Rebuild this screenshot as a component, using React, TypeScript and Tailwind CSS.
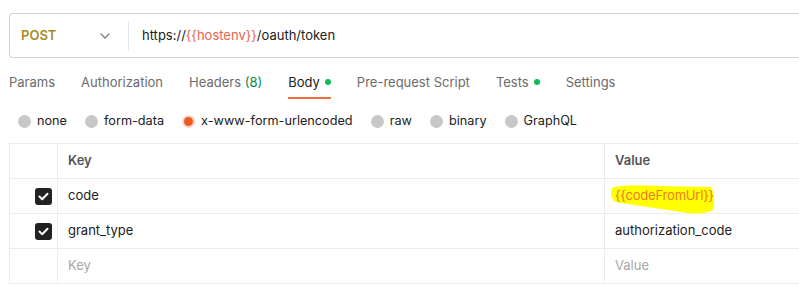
import React from "react";

const font = { fontFamily: "Inter, 'Noto Sans', sans-serif" };

function Check() {
  return (
    <div className="w-[17px] h-[17px] rounded-[3px] bg-[#222] flex items-center justify-center">
      <svg width="11" height="9" viewBox="0 0 11 9" fill="none">
        <path d="M1.5 4.5 L4.2 7.2 L9.5 1.8" stroke="white" strokeWidth="2" strokeLinecap="round" strokeLinejoin="round" />
      </svg>
    </div>
  );
}

function Radio({ label, selected }: { label: string; selected?: boolean }) {
  return (
    <div className="flex items-center gap-[6px]">
      {selected ? (
        <div className="w-[13px] h-[13px] rounded-full bg-[#fbd4c6] flex items-center justify-center">
          <div className="w-[9px] h-[9px] rounded-full bg-[#ef5b25]" />
        </div>
      ) : (
        <div className="w-[13px] h-[13px] rounded-full bg-[#c8c8c8]" />
      )}
      <span className="text-[12.7px] text-[#212121] leading-5">{label}</span>
    </div>
  );
}

export default function App() {
  const tabs: { label: React.ReactNode; active?: boolean }[] = [
    { label: "Params" },
    { label: "Authorization" },
    {
      label: (
        <>
          Headers <span className="text-[#0b8a4a]">(8)</span>
        </>
      ),
    },
    {
      label: (
        <span className="flex items-center gap-[5px]">
          Body <span className="w-[6px] h-[6px] rounded-full bg-[#0cbb52] inline-block" />
        </span>
      ),
      active: true,
    },
    { label: "Pre-request Script" },
    {
      label: (
        <span className="flex items-center gap-[5px]">
          Tests <span className="w-[6px] h-[6px] rounded-full bg-[#0cbb52] inline-block" />
        </span>
      ),
    },
    { label: "Settings" },
  ];

  return (
    <div className="w-[799px] h-[293px] bg-white overflow-hidden" style={font}>
      <div className="pt-[13px] pl-[9px]">
        <div className="h-[45px] border border-r-0 border-[#d2d2d2] rounded-l-[4px] flex items-center">
          <div className="w-[118px] flex items-center justify-between pl-[11px] pr-[18px]">
            <span className="text-[13px] font-semibold text-[#a98a21]">POST</span>
            <svg width="10" height="6" viewBox="0 0 10 6" fill="none">
              <path d="M1 1 L5 5 L9 1" stroke="#7a7a7a" strokeWidth="1.2" strokeLinecap="round" strokeLinejoin="round" />
            </svg>
          </div>
          <div className="w-px h-[30px] bg-[#e6e6e6]" />
          <div className="pl-[13px] text-[13px] text-[#212121]">
            https://<span className="text-[#e8664c]">{"{{hostenv}}"}</span>/oauth/token
          </div>
        </div>
      </div>

      <div className="flex pl-[9px] gap-[26px]">
        {tabs.map((t, i) => (
          <div
            key={i}
            className={`pt-[14px] pb-[5px] text-[13px] leading-5 border-b-2 ${
              t.active ? "border-[#f26b3a] text-[#212121]" : "border-transparent text-[#6b6b6b]"
            }`}
          >
            {t.label}
          </div>
        ))}
      </div>

      <div className="flex items-center pl-[18px] mt-[12px] gap-[18px]">
        <Radio label="none" />
        <Radio label="form-data" />
        <Radio label="x-www-form-urlencoded" selected />
        <Radio label="raw" />
        <Radio label="binary" />
        <Radio label="GraphQL" />
      </div>

      <div className="mt-[12px] ml-[9px] border-t border-l border-[#ececec] text-[13px]">
        <div className="grid grid-cols-[48px_547px_1fr] h-[35px] border-b border-[#ececec]">
          <div className="border-r border-[#ececec]" />
          <div className="border-r border-[#ececec] flex items-center pl-[10px] font-semibold text-[#555]">Key</div>
          <div className="flex items-center pl-[10px] font-semibold text-[#555]">Value</div>
        </div>
        <div className="grid grid-cols-[48px_547px_1fr] h-[35px] border-b border-[#ececec]">
          <div className="border-r border-[#ececec] flex items-center justify-end pr-[5px]">
            <Check />
          </div>
          <div className="border-r border-[#ececec] flex items-center pl-[10px] text-[#212121]">code</div>
          <div className="relative flex items-center pl-[10px]">
            <svg className="absolute left-0 top-0" width="120" height="36" viewBox="0 0 120 36">
              <path
                d="M7,9 Q16,5 56,7 L106,8 Q111,17 108,31 Q96,37 76,33 Q36,27 10,23 Q4,17 7,9Z"
                fill="#ffff00"
              />
            </svg>
            <span className="relative text-[#ee7a2a] tracking-[-0.2px]">{"{{codeFromUrl}}"}</span>
          </div>
        </div>
        <div className="grid grid-cols-[48px_547px_1fr] h-[35px] border-b border-[#ececec]">
          <div className="border-r border-[#ececec] flex items-center justify-end pr-[5px]">
            <Check />
          </div>
          <div className="border-r border-[#ececec] flex items-center pl-[10px] text-[#212121]">grant_type</div>
          <div className="flex items-center pl-[10px] text-[#212121]">authorization_code</div>
        </div>
        <div className="grid grid-cols-[48px_547px_1fr] h-[35px] border-b border-[#ececec]">
          <div className="border-r border-[#ececec]" />
          <div className="border-r border-[#ececec] flex items-center pl-[10px] text-[#a6a6a6]">Key</div>
          <div className="flex items-center pl-[10px] text-[#a6a6a6]">Value</div>
        </div>
      </div>
    </div>
  );
}
